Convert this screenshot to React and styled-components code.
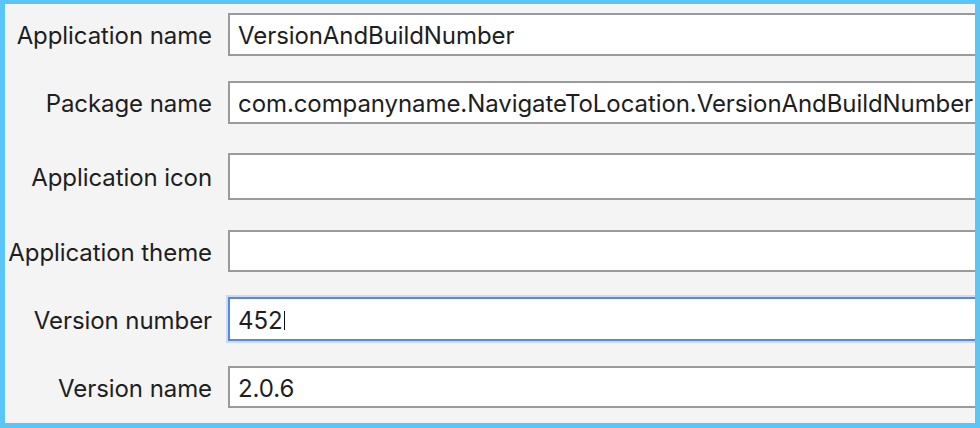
import styled, { createGlobalStyle } from "styled-components";

const fields = [
  { label: "Application name", value: "VersionAndBuildNumber", top: 9, h: 43 },
  { label: "Package name", value: "com.companyname.NavigateToLocation.VersionAndBuildNumber", top: 25, h: 43 },
  { label: "Application icon", value: "", top: 29, h: 47 },
  { label: "Application theme", value: "", top: 30, h: 42 },
  { label: "Version number", value: "452", top: 25, h: 44, focused: true },
  { label: "Version name", value: "2.0.6", top: 25, h: 42 },
];

function App() {
  return (
    <>
      <GlobalStyle />
      <Frame>
        {fields.map(f => (
          <Row key={f.label} $top={f.top} $h={f.h}>
            <Label>{f.label}</Label>
            <Field $focused={f.focused}>
              {f.value}
              {f.focused && <Caret />}
            </Field>
          </Row>
        ))}
      </Frame>
    </>
  );
}

const GlobalStyle = createGlobalStyle`
  html, body {
    margin: 0;
    padding: 0;
    background: #f4f4f4;
  }
`;

const Frame = styled.div`
  width: 980px;
  height: 428px;
  box-sizing: border-box;
  border: 5px solid #5ac6f7;
  border-top-width: 4px;
  background: #f4f4f4;
  overflow: hidden;
  display: flex;
  flex-direction: column;
  font-family: Inter, "Liberation Sans", sans-serif;
  color: #1e1e1e;
`;

const Row = styled.div`
  display: grid;
  grid-template-columns: 207px 1fr;
  column-gap: 16px;
  align-items: center;
  margin-top: ${p => p.$top}px;
  height: ${p => p.$h}px;
  flex-shrink: 0;
`;

const Label = styled.div`
  text-align: right;
  font-size: 24px;
  white-space: nowrap;
  letter-spacing: -0.08px;
  padding-top: 2px;
`;

const Field = styled.div`
  height: 100%;
  margin-right: -20px;
  box-sizing: border-box;
  background: #fff;
  border: 2px solid ${p => (p.$focused ? "#5a88e0" : "#9a9a9a")};
  box-shadow: ${p => (p.$focused ? "0 0 0 2px #cddaf1" : "none")};
  display: flex;
  align-items: center;
  padding: 2px 0 0 8px;
  font-size: 24px;
  white-space: nowrap;
  overflow: hidden;
  letter-spacing: -0.08px;
`;

const Caret = styled.span`
  display: inline-block;
  width: 1.5px;
  height: 19px;
  margin-left: 1px;
  background: #111;
`;

export default App;
